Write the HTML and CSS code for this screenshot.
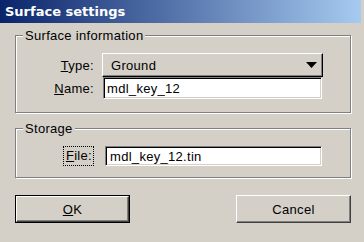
FILE: index.html
```html
<!DOCTYPE html>
<html>
<head>
<meta charset="utf-8">
<link rel="stylesheet" href="styles.css">
</head>
<body>
<div class="dialog">
  <div class="titlebar"><span class="title">Surface settings</span></div>
  <div class="content">
    <div class="group group-info">
      <span class="legend">Surface information</span>
      <div class="form-grid">
        <label class="lbl"><u>T</u>ype:</label>
        <div class="combo">
          <span class="combo-text">Ground</span>
          <svg class="combo-arrow" width="11" height="6" viewBox="0 0 11 6"><polygon points="0,0 11,0 5.5,6" fill="#000"/></svg>
        </div>
        <label class="lbl lbl-name"><u>N</u>ame:</label>
        <div class="field field-name">mdl_key_12</div>
      </div>
    </div>
    <div class="group group-storage">
      <span class="legend">Storage</span>
      <div class="form-grid">
        <label class="lbl"><span class="focus"><u>F</u>ile:</span></label>
        <div class="field field-file">mdl_key_12.tin</div>
      </div>
    </div>
    <div class="buttons">
      <div class="btn btn-default"><span class="btn-face"><u>O</u>K</span></div>
      <div class="btn btn-plain"><span class="btn-face">Cancel</span></div>
    </div>
  </div>
</div>
</body>
</html>
```
FILE: styles.css
```css
html, body {
  margin: 0;
  padding: 0;
}
body {
  width: 364px;
  height: 242px;
  overflow: hidden;
  background: #d4d0c8;
  font-family: "Liberation Sans", Arial, sans-serif;
  font-size: 13px;
  letter-spacing: 0.3px;
  color: #000;
}
.titlebar {
  height: 23px;
  margin-right: 3px;
  padding-left: 5px;
  display: flex;
  align-items: center;
  background: linear-gradient(to right, #0a246a, #a6caf0);
}
.title {
  font-family: "DejaVu Sans", sans-serif;
  font-weight: bold;
  font-size: 13px;
  letter-spacing: 0;
  color: #fff;
}
.content {
  padding-left: 15px;
}
.group {
  position: relative;
  width: 336px;
  box-sizing: border-box;
  border: 1px solid #808080;
  box-shadow: inset 1px 1px 0 #fff, 1px 1px 0 #fff;
}
.group-info {
  margin-top: 12px;
  height: 78px;
  padding-top: 17px;
}
.group-storage {
  margin-top: 15px;
  height: 50px;
  padding-top: 17px;
}
.legend {
  position: absolute;
  top: -8px;
  left: 7px;
  padding: 0 2px;
  line-height: 15px;
  background: #d4d0c8;
}
.form-grid {
  display: grid;
  grid-template-columns: 78px 221px;
  column-gap: 8px;
  align-items: center;
}
.lbl {
  text-align: right;
}
.combo {
  height: 24px;
  box-sizing: border-box;
  display: flex;
  align-items: center;
  justify-content: space-between;
  padding: 0 5px 0 8px;
  border: 1px solid;
  border-color: #fff #000 #000 #fff;
  box-shadow: inset -1px -1px 0 #808080;
}
.combo-arrow {
  display: block;
}
.field {
  box-sizing: border-box;
  display: flex;
  align-items: center;
  padding-left: 3px;
  background: #fff;
  border: 1px solid;
  border-color: #808080 #fff #fff #808080;
  box-shadow: inset 1px 1px 0 #000, inset -1px -1px 0 #d4d0c8;
}
.field-name {
  height: 22px;
  margin: 0 1px;
}
.field-file {
  height: 20px;
  margin-left: 3px;
  margin-right: 1px;
  padding-left: 4px;
}
.focus {
  display: inline-block;
  padding: 1px 1px 2px 2px;
  border: 1px dotted #000;
}
.buttons {
  width: 336px;
  margin-top: 17px;
  display: flex;
  justify-content: space-between;
}
.btn {
  width: 115px;
  height: 28px;
  box-sizing: border-box;
  display: flex;
}
.btn-default {
  border: 1px solid #000;
}
.btn-face {
  flex: 1;
  display: flex;
  align-items: center;
  justify-content: center;
  border: 1px solid;
  border-color: #fff #404040 #404040 #fff;
  box-shadow: inset -1px -1px 0 #808080;
}
```
